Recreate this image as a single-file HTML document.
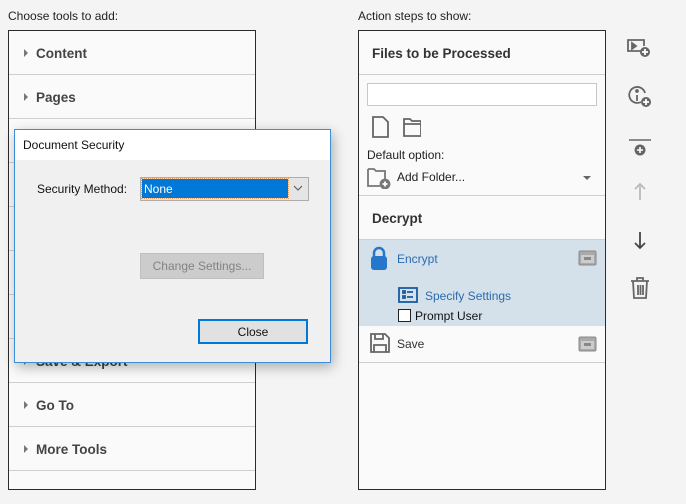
<!DOCTYPE html>
<html><head><style>
*{margin:0;padding:0;box-sizing:border-box}
body{width:686px;height:504px;background:#f4f4f4;font-family:"Segoe UI","Liberation Sans",sans-serif;font-size:12px;color:#222;position:relative;overflow:hidden}
.a{position:absolute}
.panel{position:absolute;border:1px solid #2b2b2b;background:#fafafa}
.row{position:absolute;left:0;right:0;height:44px;border-bottom:1px solid #cfcfcf}
.row b{position:absolute;left:27px;top:15px;font-size:13.5px;color:#444}
.row i{position:absolute;left:15px;top:18px;width:0;height:0;border-left:4px solid #777;border-top:4px solid transparent;border-bottom:4px solid transparent}
.sep{position:absolute;left:0;right:0;height:1px;background:#cfcfcf}
</style></head><body>
<div class="a" style="left:8px;top:9px;font-size:12px">Choose tools to add:</div>
<div class="a" style="left:358px;top:9px">Action steps to show:</div>

<div class="panel" style="left:8px;top:30px;width:248px;height:460px">
 <div class="row" style="top:0"><i></i><b>Content</b></div>
 <div class="row" style="top:44px"><i></i><b>Pages</b></div>
 <div class="row" style="top:88px"></div>
 <div class="row" style="top:132px"></div>
 <div class="row" style="top:176px"></div>
 <div class="row" style="top:220px"></div>
 <div class="row" style="top:264px"></div>
 <div class="row" style="top:308px"><i></i><b>Save &amp; Export</b></div>
 <div class="row" style="top:352px"><i></i><b>Go To</b></div>
 <div class="row" style="top:396px"><i></i><b>More Tools</b></div>
</div>

<div class="panel" style="left:358px;top:30px;width:248px;height:460px">
 <div class="a" style="left:13px;top:15px;font-size:13.5px;font-weight:bold;color:#333">Files to be Processed</div>
 <div class="sep" style="top:43px"></div>
 <div class="a" style="left:8px;top:52px;width:230px;height:23px;border:1px solid #c8c8c8;background:#fff"></div>
 <svg class="a" style="left:12px;top:85px" width="50" height="22" viewBox="0 0 50 22" fill="none" stroke="#666" stroke-width="1.8"><path d="M2 1h10l5 5v15H2z"/><path d="M33 3h6l2 2h9v15H33z M33 8h17"/></svg>
 <div class="a" style="left:8px;top:117px">Default option:</div>
 <svg class="a" style="left:8px;top:136px" width="24" height="22" viewBox="0 0 24 22" fill="none" stroke="#777" stroke-width="1.8"><path d="M1 2h6l2 2h9v8M1 2v17h12"/><circle cx="18" cy="17" r="4.5" fill="#777"/><path d="M18 14.5v5M15.5 17h5" stroke="#fff"/></svg>
 <div class="a" style="left:38px;top:139px">Add Folder...</div>
 <div class="a" style="left:224px;top:145px;border-top:4px solid #666;border-left:4px solid transparent;border-right:4px solid transparent"></div>
 <div class="sep" style="top:164px"></div>
 <div class="a" style="left:13px;top:180px;font-size:13.5px;font-weight:bold;color:#333">Decrypt</div>
 <div class="sep" style="top:208px"></div>
 <div class="a" style="left:0;top:209px;width:246px;height:86px;background:#d4e1ea"></div>
 <svg class="a" style="left:11px;top:214px" width="18" height="26" viewBox="0 0 18 26"><path d="M4 12V8a5 5 0 0 1 10 0v4" fill="none" stroke="#2676c9" stroke-width="2.5"/><rect x="1" y="11" width="16" height="14" rx="3" fill="#2676c9"/></svg>
 <div class="a" style="left:38px;top:221px;color:#2a6cb0">Encrypt</div>
 <svg class="a" style="left:219px;top:219px" width="19" height="16" viewBox="0 0 19 16"><rect x="1" y="1" width="17" height="14" rx="1.5" fill="#aaa" stroke="#888"/><rect x="3" y="5" width="13" height="8" fill="#ccc"/><rect x="6" y="7" width="7" height="3" fill="#888"/></svg>
 <svg class="a" style="left:39px;top:256px" width="20" height="16" viewBox="0 0 20 16" fill="none" stroke="#1a5aa0" stroke-width="1.8"><rect x="1" y="1" width="18" height="14"/><rect x="5" y="4" width="2" height="2" fill="#1a5aa0"/><rect x="5" y="9" width="2" height="2" fill="#1a5aa0"/><path d="M9 5h6M9 10h6"/></svg>
 <div class="a" style="left:66px;top:258px;color:#2a6cb0">Specify Settings</div>
 <div class="a" style="left:39px;top:278px;width:13px;height:13px;border:1px solid #222;background:#fff"></div>
 <div class="a" style="left:56px;top:278px;color:#111">Prompt User</div>
 <svg class="a" style="left:11px;top:302px" width="20" height="20" viewBox="0 0 20 20" fill="none" stroke="#666" stroke-width="1.8"><path d="M1 1h14l4 4v14H1z"/><path d="M5 1v5h8V1M4 19v-7h12v7"/></svg>
 <div class="a" style="left:38px;top:306px;color:#333">Save</div>
 <svg class="a" style="left:219px;top:305px" width="19" height="16" viewBox="0 0 19 16"><rect x="1" y="1" width="17" height="14" rx="1.5" fill="#aaa" stroke="#888"/><rect x="3" y="5" width="13" height="8" fill="#ccc"/><rect x="6" y="7" width="7" height="3" fill="#888"/></svg>
 <div class="sep" style="top:331px"></div>
</div>

<svg class="a" style="left:626px;top:38px" width="28" height="22" viewBox="0 0 28 22" fill="none" stroke="#666" stroke-width="1.8"><path d="M15 13H2V2h16v6"/><path d="M6 5v6l4-3z" fill="#666"/><circle cx="19" cy="14" r="5" fill="#666" stroke="none"/><path d="M19 11v6M16 14h6" stroke="#fff"/></svg>
<svg class="a" style="left:627px;top:86px" width="28" height="24" viewBox="0 0 28 24" fill="none" stroke="#666" stroke-width="1.8"><path d="M14 16a8 8 0 1 1 4-9"/><circle cx="10" cy="5" r="1" fill="#666"/><path d="M10 9v6"/><circle cx="19" cy="16" r="5" fill="#666" stroke="none"/><path d="M19 13v6M16 16h6" stroke="#fff"/></svg>
<svg class="a" style="left:628px;top:138px" width="24" height="20" viewBox="0 0 24 20"><path d="M1 2h22" stroke="#666" stroke-width="1.5"/><circle cx="12" cy="12" r="5.5" fill="#666"/><path d="M12 9v6M9 12h6" stroke="#fff" stroke-width="1.6"/></svg>
<svg class="a" style="left:633px;top:182px" width="14" height="20" viewBox="0 0 14 20" fill="none" stroke="#bbb" stroke-width="1.8"><path d="M7 18V2M2 7l5-5 5 5"/></svg>
<svg class="a" style="left:633px;top:230px" width="14" height="20" viewBox="0 0 14 20" fill="none" stroke="#444" stroke-width="1.8"><path d="M7 2v16M2 13l5 5 5-5"/></svg>
<svg class="a" style="left:630px;top:276px" width="20" height="24" viewBox="0 0 20 24" fill="none" stroke="#666" stroke-width="1.8"><path d="M1 5h18M7 5V2h6v3M3 5l1 17h12l1-17M8 9v10M10.5 9v10M13 9v10"/></svg>

<div class="a" style="left:14px;top:129px;width:317px;height:234px;border:1px solid #3c8ed8;background:#f0f0f0;box-shadow:2px 4px 12px rgba(0,0,0,.3)">
 <div class="a" style="left:0;top:0;width:315px;height:30px;background:#fff"></div>
 <div class="a" style="left:8px;top:8px;color:#111">Document Security</div>
 <div class="a" style="left:22px;top:52px;color:#111">Security Method:</div>
 <div class="a" style="left:125px;top:47px;width:169px;height:24px;border:1px solid #adadad;background:#e5e5e5"></div>
 <div class="a" style="left:127px;top:49px;width:146px;height:19px;background:#0078d7;outline:1px dotted #e8a060;color:#fff;padding:2px 2px;line-height:16px">None</div>
 <svg class="a" style="left:278px;top:55px" width="10" height="7" viewBox="0 0 10 7" fill="none" stroke="#555"><path d="M1 1l4 4 4-4"/></svg>
 <div class="a" style="left:125px;top:123px;width:124px;height:26px;border:1px solid #bfbfbf;background:#cccccc;color:#838383;text-align:center;line-height:25px">Change Settings...</div>
 <div class="a" style="left:183px;top:189px;width:110px;height:25px;border:2px solid #0078d7;background:#e1e1e1;color:#111;text-align:center;line-height:22px">Close</div>
</div>
</body></html>
